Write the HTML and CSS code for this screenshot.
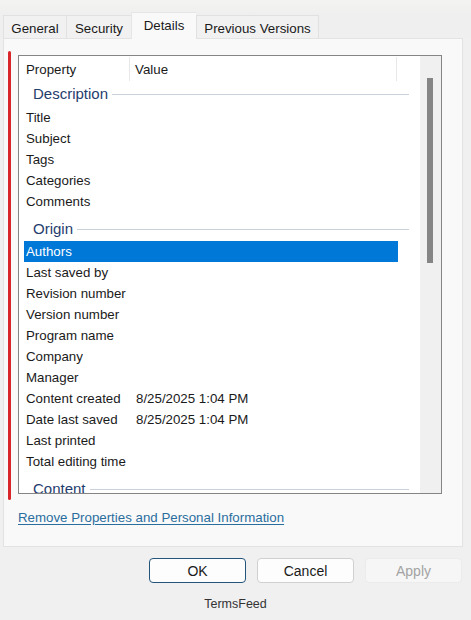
FILE: index.html
```html
<!DOCTYPE html>
<html>
<head>
<meta charset="utf-8">
<link rel="stylesheet" href="styles.css">
</head>
<body>
<div class="dialog">
  <div class="tabs">
    <div class="tab t-general">General</div>
    <div class="tab t-security">Security</div>
    <div class="tab tab-active t-details">Details</div>
    <div class="tab t-prev">Previous Versions</div>
  </div>
  <div class="page">
    <div class="main">
      <div class="redbar"></div>
      <div class="listbox">
        <div class="list">
          <div class="head">
            <div class="hcol hname">Property</div>
            <div class="hcol hvalue">Value</div>
            <div class="hcol hrest"></div>
          </div>
          <div class="group first"><span class="glabel">Description</span><span class="gline"></span></div>
          <div class="row"><span class="name">Title</span><span class="value"></span></div>
          <div class="row"><span class="name">Subject</span><span class="value"></span></div>
          <div class="row"><span class="name">Tags</span><span class="value"></span></div>
          <div class="row"><span class="name">Categories</span><span class="value"></span></div>
          <div class="row"><span class="name">Comments</span><span class="value"></span></div>
          <div class="group"><span class="glabel">Origin</span><span class="gline"></span></div>
          <div class="row selected"><span class="name">Authors</span><span class="value"></span></div>
          <div class="row"><span class="name">Last saved by</span><span class="value"></span></div>
          <div class="row"><span class="name">Revision number</span><span class="value"></span></div>
          <div class="row"><span class="name">Version number</span><span class="value"></span></div>
          <div class="row"><span class="name">Program name</span><span class="value"></span></div>
          <div class="row"><span class="name">Company</span><span class="value"></span></div>
          <div class="row"><span class="name">Manager</span><span class="value"></span></div>
          <div class="row"><span class="name">Content created</span><span class="value">8/25/2025 1:04 PM</span></div>
          <div class="row"><span class="name">Date last saved</span><span class="value">8/25/2025 1:04 PM</span></div>
          <div class="row"><span class="name">Last printed</span><span class="value"></span></div>
          <div class="row"><span class="name">Total editing time</span><span class="value"></span></div>
          <div class="group"><span class="glabel">Content</span><span class="gline"></span></div>
        </div>
        <div class="scrollbar"><div class="thumb"></div></div>
      </div>
    </div>
    <a class="link" href="#">Remove Properties and Personal Information</a>
  </div>
  <div class="buttons">
    <button class="btn btn-ok">OK</button>
    <button class="btn">Cancel</button>
    <button class="btn btn-disabled">Apply</button>
  </div>
  <div class="caption">TermsFeed</div>
</div>
</body>
</html>
```

FILE: styles.css
```css
* { box-sizing: border-box; }
html, body {
  margin: 0;
  padding: 0;
}
body {
  width: 471px;
  height: 620px;
  overflow: hidden;
  background: #f0f0f0;
  font-family: "Liberation Sans", Arial, sans-serif;
  font-size: 13.3px;
  color: #1a1a1a;
}
.dialog {
  width: 471px;
  height: 620px;
  display: flex;
  flex-direction: column;
}
.tabs {
  display: flex;
  align-items: flex-end;
  height: 38px;
  padding-left: 3px;
  background: linear-gradient(#f4f4f2, #efefef 14px);
}
.tab {
  height: 23px;
  line-height: 25px;
  background: #f1f1f1;
  border: 1px solid #e1e1e1;
  border-bottom: none;
  border-right: none;
  text-align: center;
  color: #1a1a1a;
}
.t-general { width: 63px; }
.t-security { width: 65px; }
.t-details { width: 65px; }
.t-prev { width: 123px; border-right: 1px solid #e1e1e1; }
.tab-active {
  background: #f9f9f9;
  border-color: #e6e6e6;
  position: relative;
  z-index: 1;
  margin-bottom: -1px;
  height: 27px;
  line-height: 25px;
  padding-bottom: 1px;
}
.page {
  margin-left: 3px;
  width: 460px;
  height: 509px;
  background: #f9f9f9;
  border: 1px solid #e3e3e3;
  padding: 12px 0 0 4px;
}
.main {
  display: flex;
  align-items: flex-start;
}
.redbar {
  width: 3px;
  height: 449px;
  background: #d9262b;
  border-radius: 2px;
  margin-right: 7px;
}
.listbox {
  margin-top: 4px;
  width: 424px;
  height: 439px;
  border: 1px solid #858585;
  background: #ffffff;
  display: flex;
}
.list {
  flex: 1;
  overflow: hidden;
  display: flex;
  flex-direction: column;
}
.scrollbar {
  width: 21px;
  flex: none;
  background: #f0f0f0;
  padding: 22px 0 0 7px;
}
.thumb {
  width: 6px;
  height: 185px;
  background: #858585;
}
.head {
  display: flex;
  height: 26px;
  flex: none;
  align-items: stretch;
}
.hcol {
  padding-top: 1px;
  line-height: 24px;
}
.hname {
  width: 111px;
  padding-left: 7px;
  border-right: 1px solid #e8e8e8;
  margin: 1px 0;
}
.hvalue {
  width: 267px;
  padding-left: 5px;
  border-right: 1px solid #e8e8e8;
  margin: 1px 0;
}
.group {
  display: flex;
  align-items: center;
  height: 24px;
  flex: none;
  margin-top: 5px;
  padding-left: 14px;
  padding-right: 11px;
}
.group.first { margin-top: 0; height: 25px; padding-bottom: 1px; }
.glabel {
  font-size: 15px;
  color: #1f3d6d;
  margin-right: 4px;
  margin-top: -2px;
}
.gline {
  flex: 1;
  height: 1px;
  background: #c9d1da;
}
.row {
  display: flex;
  height: 21px;
  flex: none;
  line-height: 20px;
  padding-top: 1px;
  margin-left: 5px;
  width: 374px;
  padding-left: 2px;
  white-space: nowrap;
}
.row .name { width: 110px; flex: none; }
.row.selected {
  background: #0078d7;
  color: #ffffff;
}
.link {
  display: block;
  margin: 10px 0 0 10px;
  width: max-content;
  color: #2a6e9e;
  text-decoration: underline;
  text-underline-offset: 2px;
}
.buttons {
  display: flex;
  justify-content: flex-end;
  gap: 11px;
  width: 462px;
  margin-top: 11px;
}
.btn {
  width: 97px;
  height: 25px;
  font-family: "Liberation Sans", Arial, sans-serif;
  font-size: 14px;
  color: #1a1a1a;
  background: #fdfdfd;
  border: 1px solid #d0d0d0;
  border-radius: 4px;
  padding: 0;
}
.btn-ok {
  border-color: #23547a;
}
.btn-disabled {
  background: #f6f6f6;
  border-color: #ebebeb;
  color: #a3a3a3;
}
.caption {
  text-align: center;
  width: 471px;
  margin-top: 14px;
  font-size: 12.5px;
  color: #333333;
}
```
